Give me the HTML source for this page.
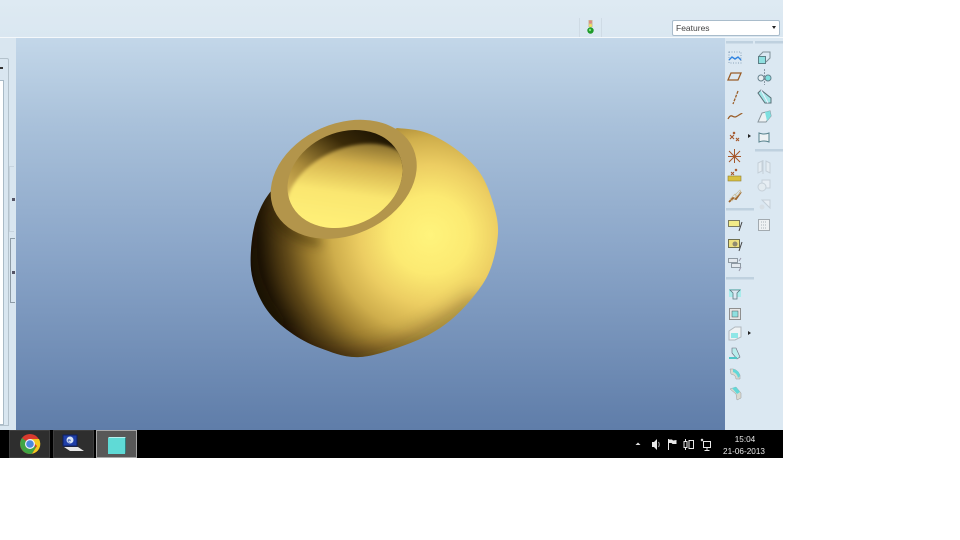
<!DOCTYPE html>
<html><head><meta charset="utf-8">
<style>
html,body{margin:0;padding:0;background:#fff;width:960px;height:540px;overflow:hidden}
.a{position:absolute}
body{font-family:"Liberation Sans",sans-serif}
</style></head>
<body>
<div class="a" style="left:0;top:0;width:783px;height:37px;background:linear-gradient(#deeaf3,#dae7f1)"></div>
<div class="a" style="left:0;top:37px;width:783px;height:1px;background:#f4f8fb"></div>
<div class="a" style="left:579px;top:18px;width:1px;height:19px;background:#cfdbe5"></div>
<div class="a" style="left:601px;top:18px;width:1px;height:19px;background:#cfdbe5"></div>
<div class="a" style="left:672px;top:20px;width:106px;height:14px;background:#fff;border:1px solid #a9bccb;border-radius:2px"></div>
<div class="a" style="left:676px;top:22.5px;font-size:8.5px;line-height:11px;color:#444">Features</div>
<div class="a" style="left:772px;top:26px;width:0;height:0;border-left:2.5px solid transparent;border-right:2.5px solid transparent;border-top:3px solid #222"></div>

<div class="a" style="left:0;top:38px;width:16px;height:392px;background:#d9e6f0"></div>
<div class="a" style="left:0;top:58px;width:9px;height:368px;border:1px solid #b4c2cc;border-left:0;border-radius:0 2px 0 0;box-sizing:border-box"></div>
<div class="a" style="left:0;top:80px;width:4px;height:345px;background:#fff;border-right:1px solid #a9bac6;border-top:1px solid #a9bac6;border-bottom:1px solid #a9bac6;box-sizing:border-box"></div>
<div class="a" style="left:0;top:67px;width:3px;height:2px;background:#333"></div>
<div class="a" style="left:9px;top:166px;width:5px;height:66px;border:1px solid #c7d4df;border-right:0;box-sizing:border-box"></div>
<div class="a" style="left:10px;top:238px;width:5px;height:65px;border:1px solid #8d9ba6;border-right:0;box-sizing:border-box"></div>
<div class="a" style="left:12px;top:198px;width:3px;height:3px;background:#556"></div>
<div class="a" style="left:12px;top:271px;width:3px;height:3px;background:#556"></div>

<div class="a" style="left:16px;top:38px;width:709px;height:392px;background:linear-gradient(#c3d7e9 0%,#a9c1da 22%,#8aa5c8 55%,#5f7da9 100%)"></div>

<svg class="a" style="left:0;top:0" width="783" height="430" viewBox="0 0 783 430">
<defs>
<radialGradient id="pot" gradientUnits="userSpaceOnUse" cx="430" cy="235" r="195">
<stop offset="0" stop-color="#fff47c"/>
<stop offset=".2" stop-color="#fcea72"/>
<stop offset=".36" stop-color="#eccd62"/>
<stop offset=".5" stop-color="#cfae4c"/>
<stop offset=".62" stop-color="#a08030"/>
<stop offset=".74" stop-color="#5f4818"/>
<stop offset=".88" stop-color="#241805"/>
<stop offset="1" stop-color="#130c00"/>
</radialGradient>
<linearGradient id="inn" gradientUnits="userSpaceOnUse" x1="375" y1="140" x2="325" y2="220">
<stop offset="0" stop-color="#7a6228"/>
<stop offset=".3" stop-color="#d4b24e"/>
<stop offset=".62" stop-color="#fae670"/>
<stop offset="1" stop-color="#fff078"/>
</linearGradient>
<linearGradient id="wall" gradientUnits="userSpaceOnUse" x1="290" y1="190" x2="385" y2="130">
<stop offset="0" stop-color="#e0c060"/>
<stop offset=".35" stop-color="#a98a3a"/>
<stop offset=".72" stop-color="#3a2a08"/>
<stop offset="1" stop-color="#1c1302"/>
</linearGradient>
<clipPath id="pc"><path d="M397 128C407 129 417 129.300 427 133C437 136.700 448.200 143.300 457 150C465.800 156.700 474 164.200 480 173C486 181.800 490 193 493 203C496 213 498.500 221.800 498 233C497.500 244.200 494.200 259.300 490 270C485.800 280.700 480.200 288.200 473 297C465.800 305.800 457 315.500 447 323C437 330.500 427.500 336.300 413 342C398.500 347.700 375.500 356 360 357C344.500 358 331.700 352.200 320 348C308.300 343.800 298.800 338.300 290 332C281.200 325.700 273.200 318.700 267 310C260.800 301.300 255.700 290 253 280C250.300 270 250.300 260.500 251 250C251.700 239.500 253.500 227 257 217C260.500 207 265 198 272 190Z"/></clipPath>
<clipPath id="ic"><ellipse cx="345" cy="179" rx="59.4" ry="46.7" transform="rotate(-24 345 179)"/></clipPath>
<filter id="b1" filterUnits="userSpaceOnUse" x="200" y="80" width="340" height="320"><feGaussianBlur stdDeviation="1.5"/></filter>
<filter id="b4" filterUnits="userSpaceOnUse" x="200" y="80" width="340" height="320"><feGaussianBlur stdDeviation="5"/></filter>
<filter id="b8" filterUnits="userSpaceOnUse" x="200" y="80" width="340" height="320"><feGaussianBlur stdDeviation="10"/></filter>
</defs>
<path d="M397 128C407 129 417 129.300 427 133C437 136.700 448.200 143.300 457 150C465.800 156.700 474 164.200 480 173C486 181.800 490 193 493 203C496 213 498.500 221.800 498 233C497.500 244.200 494.200 259.300 490 270C485.800 280.700 480.200 288.200 473 297C465.800 305.800 457 315.500 447 323C437 330.500 427.500 336.300 413 342C398.500 347.700 375.500 356 360 357C344.500 358 331.700 352.200 320 348C308.300 343.800 298.800 338.300 290 332C281.200 325.700 273.200 318.700 267 310C260.800 301.300 255.700 290 253 280C250.300 270 250.300 260.500 251 250C251.700 239.500 253.500 227 257 217C260.500 207 265 198 272 190Z" fill="url(#pot)"/>
<g clip-path="url(#pc)">
<path d="M272 215Q285 236 320 243" fill="none" stroke="#2e2006" stroke-width="8" opacity=".5" filter="url(#b4)"/>
<path d="M480 300Q420 350 360 360T280 330" fill="none" stroke="#1a1000" stroke-width="16" opacity=".4" filter="url(#b8)"/>
<path d="M255 225Q247 290 290 332" fill="none" stroke="#0f0900" stroke-width="14" opacity=".45" filter="url(#b8)"/>
</g>
<ellipse cx="343.7" cy="179.3" rx="76" ry="55.7" transform="rotate(-24 343.7 179.3)" fill="#b3954b"/>
<ellipse cx="345" cy="179" rx="59.4" ry="46.7" transform="rotate(-24 345 179)" fill="url(#wall)"/>
<g clip-path="url(#ic)">
<ellipse cx="351" cy="194" rx="68" ry="46" transform="rotate(-24 351 194)" fill="url(#inn)" filter="url(#b1)"/>
</g>

<!-- right panel -->
<rect x="725" y="38" width="58" height="392" fill="#dbe8f2"/>
<rect x="726" y="41" width="27" height="2.5" fill="#bfd1df"/><rect x="755" y="41" width="28" height="2.5" fill="#bfd1df"/>
<rect x="755" y="149" width="28" height="2.5" fill="#bfd1df"/>
<rect x="726" y="208" width="28" height="2.5" fill="#bfd1df"/>
<rect x="726" y="277" width="28" height="2.5" fill="#bfd1df"/>

<!-- column 1 icons -->
<rect x="729" y="52" width="12" height="11" fill="none" stroke="#8ba3bb" stroke-dasharray="1 1.5"/>
<path d="M729 60l3-3 3 2 3-2 3 3" fill="none" stroke="#2f83e0" stroke-width="1.4"/>
<path d="M731 73h10l-3 7h-10z" fill="none" stroke="#9a5d28" stroke-width="1.3"/>
<path d="M738 91l-5 13" fill="none" stroke="#9a5d28" stroke-width="1.3" stroke-dasharray="3 1"/>
<path d="M728 119q2-4 4-3t3 1 4-2 3-1" fill="none" stroke="#9a5d28" stroke-width="1.3"/>
<path d="M730 139l4-4m-4 0l4 4M736 141l3-3m-3 0l3 3M733 132l2 2m0-2l-2 2" stroke="#a5562a" stroke-width="1.1" fill="none"/>
<path d="M729 151l11 11m0-11l-11 11M734.500 149v14M728 156.500h13" stroke="#a5562a" stroke-width="1" fill="none"/>
<path d="M731 172l3 3m0-3l-3 3M735 169l2 2m0-2l-2 2" stroke="#a5562a" fill="none"/>
<rect x="728" y="176" width="13" height="5" fill="#d8c040" stroke="#8f7f35" stroke-width=".6"/>
<path d="M729 202l4-4 3 1 5-7" fill="none" stroke="#a0642a" stroke-width="1.8"/>
<path d="M730 199l5-5 2 2-5 5zM735 195l5-5 1 2-5 5z" fill="none" stroke="#c9c0a0" stroke-width=".7"/>
<rect x="728.500" y="220.500" width="11" height="6" fill="#f3ec88" stroke="#7c7c60"/>
<path d="M742 222l-3 9" stroke="#444" fill="none"/>
<rect x="728.500" y="239.500" width="11" height="8" fill="#ecdf80" stroke="#6f6f50"/>
<path d="M742 242l-3 9" stroke="#444" fill="none"/><circle cx="735" cy="244" r="2.500" fill="#8f8a70"/>
<path d="M728.500 258.500h9v4h-9zM731.500 263.500h9v4h-9z" fill="#e3e9ee" stroke="#8f9aa3"/>
<path d="M741 258l-2 3M741 267l-2 4" stroke="#99a" fill="none"/>
<path d="M729 289h12v8h-12z" fill="#a9ecec"/><path d="M730 290h10l-3 3v6h-4v-6z" fill="#dbe8f2" stroke="#5a7a80" stroke-width=".8"/>
<rect x="729.500" y="308.500" width="11" height="11" fill="#e6e6e6" stroke="#8f8f8f"/><rect x="732" y="311" width="6" height="6" fill="#8fe0e0" stroke="#555" stroke-width=".5"/>
<path d="M729 331l6-4h6v10l-6 3h-6z" fill="#eef2f4" stroke="#b0b8be"/><rect x="731" y="333" width="7" height="5" fill="#8fe6e6"/>
<path d="M732 348h4l4 9-3 2-5-6z" fill="#b9ecec" stroke="#667" stroke-width=".6"/><rect x="729" y="357" width="8" height="2" fill="#4fc7c7"/>
<path d="M730 369q7-1 10 6v4h-4q0-4-5-5z" fill="#d9d9d0" stroke="#999" stroke-width=".5"/><path d="M733 369q6 1 7 7l-2 2q-1-5-5-6z" fill="#62d8d8"/>
<path d="M730 389l6-2 5 6v5l-4 2-1-6z" fill="#d9d9d0" stroke="#999" stroke-width=".5"/><path d="M732 388l4-1 4 5-3 2z" fill="#62d8d8"/>
<path d="M748 134l3 2-3 2z M748 331l3 2-3 2z" fill="#222"/>

<!-- column 2 icons -->
<rect x="758.500" y="56.500" width="7" height="7" fill="#8fe0e0" stroke="#5c7f86"/>
<path d="M759 56l4-4h7v6l-4 4" fill="none" stroke="#7f9098"/>
<path d="M764.500 69v16" stroke="#8a9aa6" stroke-dasharray="2 1"/>
<circle cx="761" cy="78" r="3" fill="#e8eef2" stroke="#66808c"/><circle cx="768" cy="78" r="3" fill="#7fdede" stroke="#66808c"/>
<path d="M758 93l3-3 10 8v5h-6z" fill="#a2e6e6" stroke="#5a7078"/><path d="M761 90l7 13" stroke="#eef" fill="none"/>
<path d="M758 122l4-9 8-2 1 5-5 6z" fill="#edf2f4" stroke="#8b979e"/><path d="M765 112l5-1 1 5-4 5z" fill="#7ee0e0"/>
<path d="M759 133q5 2 10 0v9q-5-2-10 0z" fill="#edf2f4" stroke="#55808a"/>
<g opacity=".55">
<path d="M763 160v14M758 163l4-2v10l-4 2zM770 163l-4-2v10l4 2z" fill="#edf0f2" stroke="#b3bcc3"/>
<rect x="762" y="180" width="8" height="8" fill="#f1f4f6" stroke="#b3bcc3"/><circle cx="762" cy="187" r="4" fill="#eaeeef" stroke="#b3bcc3"/>
<path d="M762 200h8v8z" fill="#f1f4f6" stroke="#b3bcc3"/><circle cx="762" cy="207" r="2.500" fill="#d5d9dc"/>
</g>
<rect x="758.500" y="219.500" width="11" height="11" fill="#eef1f3" stroke="#a2aab0"/>
<path d="M761 222h6M761 225h6M761 228h6" stroke="#aab2b8" stroke-dasharray="1 1"/>

<!-- traffic light -->
<rect x="588.500" y="20" width="4" height="7" fill="#c9b690"/>
<circle cx="590.500" cy="22" r="1.500" fill="#e08a80"/><circle cx="590.500" cy="25.500" r="1.500" fill="#efe060"/>
<circle cx="590.500" cy="30.500" r="3.200" fill="#1f9a2a"/><circle cx="590" cy="30" r="1.200" fill="#7fe07f"/>
</svg>

<!-- taskbar -->
<div class="a" style="left:0;top:430px;width:783px;height:28px;background:#000"></div>
<div class="a" style="left:9px;top:430px;width:41px;height:28px;background:#2e2e2e;box-sizing:border-box;border:1px solid #3e3e3e"></div>
<div class="a" style="left:53px;top:430px;width:41px;height:28px;background:#2e2e2e;box-sizing:border-box;border:1px solid #3e3e3e"></div>
<div class="a" style="left:96px;top:430px;width:41px;height:28px;background:#585858;box-sizing:border-box;border:1px solid #a8a8a8"></div>

<svg class="a" style="left:0;top:430px" width="783" height="28" viewBox="0 430 783 28">
<circle cx="30" cy="444" r="10" fill="#d93a2e"/>
<path d="M21.500 449A10 10 0 0 0 32 453.800L36 447 30 444z" fill="#3fa544"/>
<path d="M21.500 449A10 10 0 0 1 22 438L30 444z" fill="#3fa544"/>
<path d="M30 439h9A10 10 0 0 1 32 453.800L37 446z" fill="#f3c81e"/>
<circle cx="30" cy="444" r="5" fill="#eef"/><circle cx="30" cy="444" r="3.800" fill="#4a88dc"/>

<path d="M63 435h14v11h-14z" fill="#1f3fa8" stroke="#0c1f60"/>
<circle cx="70" cy="440" r="3.500" fill="#d7e4f7"/>
<text x="67.500" y="442.500" font-size="6" fill="#1f3fa8" font-family="Liberation Sans, sans-serif">e</text>
<path d="M64 447h14l6 4H70z" fill="#e6e6e6"/>

<path d="M108 438h17v16h-17z" fill="#5fdad6"/>
<path d="M108 438l1-1h17l-1 1z" fill="#b7f0ee"/><path d="M125 438l1-1v15l-1 2z" fill="#2f7f7e"/>

<path d="M635.500 445l2.500-2.500 2.500 2.500z" fill="#e0e0e0"/>
<path d="M652 442h2l3-3v11l-3-3h-2z" fill="#e8e8e8"/><path d="M658.500 442q1.500 2.500 0 5" stroke="#aaa" fill="none"/>
<path d="M668.500 439v11" stroke="#e8e8e8"/><path d="M669 439.500h3l1 1 3.500-.5v4h-4l-1-1h-2.500z" fill="#e8e8e8"/>
<path d="M684 441.500h3v6h-3zM689 440.500h4.500v8h-4.500z" fill="none" stroke="#e8e8e8"/><path d="M685.500 439v2M685.500 448v2" stroke="#e8e8e8"/>
<path d="M703.500 441.500h7v6h-7z" fill="none" stroke="#e8e8e8"/><path d="M701 441l2-2M701 439l2 2M707 448v2M704.500 450.500h5" stroke="#e8e8e8" fill="none"/>
</svg>
<div class="a" style="left:724px;top:434px;width:42px;text-align:center;color:#e8e8e8;font-size:8.2px;line-height:11px">15:04</div>
<div class="a" style="left:720px;top:446px;width:48px;text-align:center;color:#e8e8e8;font-size:8.2px;line-height:11px">21-06-2013</div>
</body></html>
